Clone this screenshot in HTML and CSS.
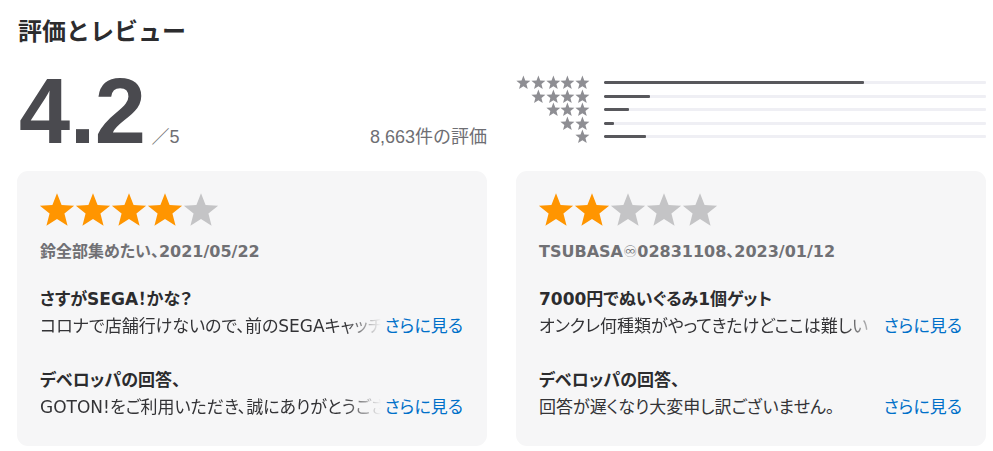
FILE: index.html
```html
<!DOCTYPE html>
<html lang="ja">
<head>
<meta charset="utf-8">
<title>評価とレビュー</title>
<link rel="stylesheet" href="styles.css">
</head>
<body>
<svg class="defs" width="0" height="0" aria-hidden="true">
  <symbol id="star" viewBox="0 0 24 24">
    <polygon points="12,0.8 15.06,8.59 23.41,9.09 16.95,14.41 19.05,22.51 12,18 4.95,22.51 7.05,14.41 0.59,9.09 8.94,8.59"/>
  </symbol>
</svg>
<main class="page">
  <h1 class="heading">評価とレビュー</h1>
  <section class="summary">
    <div class="score">
      <span class="score-value">4.2</span>
      <span class="score-max">／5</span>
      <span class="score-count">8,663件の評価</span>
    </div>
    <div class="histogram">
      <div class="hist-row">
        <div class="hist-stars"><svg class="hs"><use href="#star"/></svg><svg class="hs"><use href="#star"/></svg><svg class="hs"><use href="#star"/></svg><svg class="hs"><use href="#star"/></svg><svg class="hs"><use href="#star"/></svg></div>
        <div class="bar"><div class="bar-fill" style="width:68%"></div></div>
      </div>
      <div class="hist-row">
        <div class="hist-stars"><svg class="hs"><use href="#star"/></svg><svg class="hs"><use href="#star"/></svg><svg class="hs"><use href="#star"/></svg><svg class="hs"><use href="#star"/></svg></div>
        <div class="bar"><div class="bar-fill" style="width:12%"></div></div>
      </div>
      <div class="hist-row">
        <div class="hist-stars"><svg class="hs"><use href="#star"/></svg><svg class="hs"><use href="#star"/></svg><svg class="hs"><use href="#star"/></svg></div>
        <div class="bar"><div class="bar-fill" style="width:6.6%"></div></div>
      </div>
      <div class="hist-row">
        <div class="hist-stars"><svg class="hs"><use href="#star"/></svg><svg class="hs"><use href="#star"/></svg></div>
        <div class="bar"><div class="bar-fill" style="width:2.7%"></div></div>
      </div>
      <div class="hist-row">
        <div class="hist-stars"><svg class="hs"><use href="#star"/></svg></div>
        <div class="bar"><div class="bar-fill" style="width:11%"></div></div>
      </div>
    </div>
  </section>
  <section class="reviews">
    <article class="card">
      <div class="rating">
        <svg class="rs on"><use href="#star"/></svg><svg class="rs on"><use href="#star"/></svg><svg class="rs on"><use href="#star"/></svg><svg class="rs on"><use href="#star"/></svg><svg class="rs off"><use href="#star"/></svg>
      </div>
      <p class="author">鈴全部集めたい、2021/05/22</p>
      <h2 class="review-title">さすがSEGA！かな？</h2>
      <div class="line">
        <span class="text">コロナで店舗行けないので、前のSEGAキャッチャーオンラインで遊んでいました</span>
        <a class="more" href="#">さらに見る</a>
      </div>
      <h3 class="reply-title">デベロッパの回答、</h3>
      <div class="line">
        <span class="text">GOTON!をご利用いただき、誠にありがとうございます。</span>
        <a class="more" href="#">さらに見る</a>
      </div>
    </article>
    <article class="card">
      <div class="rating">
        <svg class="rs on"><use href="#star"/></svg><svg class="rs on"><use href="#star"/></svg><svg class="rs off"><use href="#star"/></svg><svg class="rs off"><use href="#star"/></svg><svg class="rs off"><use href="#star"/></svg>
      </div>
      <p class="author">TSUBASA♾02831108、2023/01/12</p>
      <h2 class="review-title">7000円でぬいぐるみ1個ゲット</h2>
      <div class="line">
        <span class="text">オンクレ何種類がやってきたけどここは難しい</span>
        <a class="more" href="#">さらに見る</a>
      </div>
      <h3 class="reply-title">デベロッパの回答、</h3>
      <div class="line">
        <span class="text plain">回答が遅くなり大変申し訳ございません。</span>
        <a class="more" href="#">さらに見る</a>
      </div>
    </article>
  </section>
</main>
</body>
</html>
```

FILE: styles.css
```css
* { box-sizing: border-box; }

html, body {
  margin: 0;
  padding: 0;
  background: #ffffff;
}

body {
  font-family: "Liberation Sans", "Noto Sans CJK JP", sans-serif;
  color: #333333;
}

.defs {
  position: absolute;
  width: 0;
  height: 0;
  overflow: hidden;
}

.page {
  padding: 17px 7px 0 17px;
}

.heading {
  margin: 0;
  font-size: 24px;
  line-height: 29px;
  font-weight: 700;
  color: #2c2c2e;
  padding-left: 1px;
}

.summary {
  display: grid;
  grid-template-columns: 470px 470px;
  column-gap: 29px;
  margin-top: 20px;
  height: 105px;
}

.score {
  display: flex;
  align-items: baseline;
  height: 90px;
}

.score-value {
  font-size: 92px;
  line-height: 90px;
  font-weight: 700;
  color: #4a4a4f;
  letter-spacing: -0.5px;
  padding-left: 2px;
}

.score-max {
  font-size: 18px;
  color: #6e6e73;
  margin-left: 6px;
}

.score-count {
  margin-left: auto;
  font-size: 18px;
  color: #6e6e73;
}

.histogram {
  display: flex;
  flex-direction: column;
  padding-top: 10px;
}

.hist-row {
  display: grid;
  grid-template-columns: 74px 1fr;
  column-gap: 14px;
  align-items: center;
  height: 13.5px;
}

.hist-stars {
  display: flex;
  justify-content: flex-end;
  align-items: center;
  height: 13.5px;
}

.hs {
  width: 14.8px;
  height: 15px;
  fill: #8e8e93;
  display: block;
  flex: none;
}

.bar {
  height: 3px;
  background: #efeff4;
  border-radius: 1px;
  overflow: hidden;
}

.bar-fill {
  height: 100%;
  background: #58585c;
  border-radius: 1px;
}

.reviews {
  display: grid;
  grid-template-columns: 470px 470px;
  column-gap: 29px;
}

.card {
  background: #f6f6f7;
  border-radius: 11px;
  padding: 21px 24px 26px 23px;
  height: 275px;
  font-family: "DejaVu Sans", "Noto Sans CJK JP", sans-serif;
  font-feature-settings: "palt";
}

.rating {
  display: flex;
  height: 36px;
  margin-left: -1px;
}

.rs {
  width: 36px;
  height: 36px;
  display: block;
  flex: none;
}

.rs.on { fill: #ff9500; }
.rs.off { fill: #c4c4c6; }

.author {
  margin: 12px 0 0;
  font-size: 16px;
  line-height: 24px;
  font-weight: 700;
  color: #707074;
}

.review-title,
.reply-title {
  margin: 0;
  font-size: 17px;
  line-height: 27px;
  font-weight: 700;
  color: #2c2c2e;
}

.review-title { margin-top: 22px; }
.reply-title { margin-top: 27px; }

.line {
  display: flex;
  align-items: baseline;
  font-size: 17px;
  line-height: 27px;
}

.text {
  flex: 1;
  min-width: 0;
  white-space: nowrap;
  overflow: hidden;
  color: #333336;
  -webkit-mask-image: linear-gradient(to right, #000 calc(100% - 40px), transparent calc(100% - 4px));
  mask-image: linear-gradient(to right, #000 calc(100% - 40px), transparent calc(100% - 4px));
}

.text.plain {
  -webkit-mask-image: none;
  mask-image: none;
}

.more {
  flex: none;
  color: #0070c9;
  text-decoration: none;
}
```
